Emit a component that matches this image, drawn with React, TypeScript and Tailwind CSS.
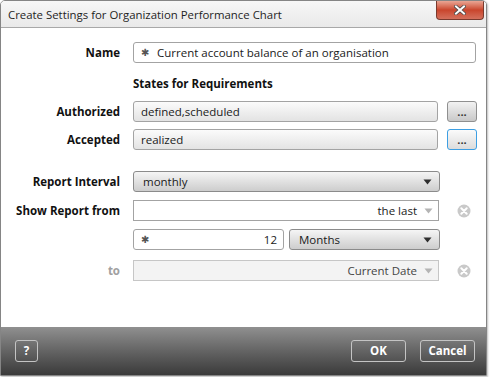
import React from "react";

const font = { fontFamily: '"Open Sans", "Noto Sans", Arial, sans-serif' };

const Caret = ({ light = false }: { light?: boolean }) => (
    <svg width="9" height="6" viewBox="0 0 9 6" className="shrink-0">
        <path d="M0.5 0.5 L8.5 0.5 L4.5 5.5 Z" fill={light ? "#b4b4b4" : "#2e2e2e"} />
    </svg>
);

const ClearIcon = () => (
    <svg width="14" height="14" viewBox="0 0 14 14">
        <circle cx="7" cy="7" r="6.5" fill="#c9c9c9" />
        <path d="M4.3 4.3 L9.7 9.7 M9.7 4.3 L4.3 9.7" stroke="#ffffff" strokeWidth="2" strokeLinecap="round" />
    </svg>
);

const Label = ({ children, muted = false }: { children: React.ReactNode; muted?: boolean }) => (
    <div className={`w-[120px] shrink-0 pr-[1px] text-right text-[11.5px] font-bold ${muted ? "text-[#a0a0a0]" : "text-[#111]"}`}>
        {children}
    </div>
);

const DotsButton = ({ focused = false }: { focused?: boolean }) => (
    <button
        className={`ml-[9px] flex h-[21px] w-[30px] items-end justify-center rounded-[3px] border pb-[4px] text-[11px] font-bold leading-none ${
            focused
                ? "border-[#3d9fe3] bg-gradient-to-b from-[#fbfbfb] to-[#dcdcdc]"
                : "border-[#8f8f8f] bg-gradient-to-b from-[#f2f2f2] to-[#c9c9c9]"
        } text-[#333]`}
    >
        ...
    </button>
);

export default function App() {
    return (
        <div className="h-[377px] w-[490px] bg-white" style={font}>
            <div className="flex h-[376px] w-[487px] flex-col overflow-hidden rounded-t-[5px] border border-[#858585] shadow-[1px_1px_2px_rgba(0,0,0,0.25)]">
                {/* Title bar */}
                <div className="flex h-[26px] shrink-0 items-start justify-between bg-gradient-to-b from-[#f7f7f7] to-[#e9e9e9] pl-[7px]">
                    <div className="pt-[6px] text-[11.4px] leading-[16px] text-[#1e1e1e]">
                        Create Settings for Organization Performance Chart
                    </div>
                    <div className="mr-[2px] flex h-[19px] w-[48px] items-center justify-center rounded-b-[4px] border border-t-0 border-[#7a3a2e] bg-gradient-to-b from-[#e9a594] via-[#c9452c] to-[#d4705c]">
                        <svg width="12" height="10" viewBox="0 0 12 10">
                            <path d="M2 1.5 L10 8.5 M10 1.5 L2 8.5" stroke="#4a4a4a" strokeWidth="3.6" strokeLinecap="square" />
                            <path d="M2 1.5 L10 8.5 M10 1.5 L2 8.5" stroke="#ffffff" strokeWidth="2" strokeLinecap="square" />
                        </svg>
                    </div>
                </div>

                {/* Content */}
                <div className="flex flex-1 flex-col border-t border-[#a8a8a8] bg-white pt-[14px] text-[11.5px]">
                    <div className="flex items-center">
                        <Label>Name</Label>
                        <div className="ml-[12px] flex h-[21px] w-[343px] items-center rounded-[3px] border border-[#a3a3a3] bg-white pl-[7px] text-[#1a1a1a]">
                            <span className="mr-[8px] text-[10px] text-[#555]">✱</span>
                            Current account balance of an organisation
                        </div>
                    </div>

                    <div className="ml-[132px] mt-[12px] font-bold leading-[17px] text-[#111]">
                        States for Requirements
                    </div>

                    <div className="mt-[9px] flex items-center">
                        <Label>Authorized</Label>
                        <div className="ml-[12px] flex h-[21px] w-[305px] items-center rounded-[3px] border border-[#a3a3a3] bg-gradient-to-b from-[#fbfbfb] to-[#e3e3e3] pl-[7px] text-[#1a1a1a]">
                            defined,scheduled
                        </div>
                        <DotsButton />
                    </div>

                    <div className="mt-[7px] flex items-center">
                        <Label>Accepted</Label>
                        <div className="ml-[12px] flex h-[21px] w-[305px] items-center rounded-[3px] border border-[#a3a3a3] bg-gradient-to-b from-[#fbfbfb] to-[#e3e3e3] pl-[7px] text-[#1a1a1a]">
                            realized
                        </div>
                        <DotsButton focused />
                    </div>

                    <div className="mt-[21px] flex items-center">
                        <Label>Report Interval</Label>
                        <div className="ml-[12px] flex h-[21px] w-[307px] items-center justify-between rounded-[3px] border border-[#8b8b8b] bg-gradient-to-b from-[#f5f5f5] to-[#cdcdcd] pl-[9px] pr-[7px] text-[#1a1a1a]">
                            monthly
                            <Caret />
                        </div>
                    </div>

                    <div className="mt-[8px] flex items-center">
                        <Label>Show Report from</Label>
                        <div className="ml-[12px] flex h-[21px] w-[306px] items-center justify-end gap-[7px] border border-[#a3a3a3] bg-white pr-[5px] text-[#1a1a1a]">
                            the last
                            <Caret light />
                        </div>
                        <div className="ml-[18px] flex items-center">
                            <ClearIcon />
                        </div>
                    </div>

                    <div className="mt-[8px] flex items-center">
                        <div className="ml-[132px] flex h-[21px] w-[151px] items-center justify-between rounded-[3px] border border-[#a3a3a3] bg-white pl-[7px] pr-[6px] text-[#1a1a1a]">
                            <span className="text-[10px] text-[#555]">✱</span>
                            12
                        </div>
                        <div className="ml-[5px] flex h-[21px] w-[151px] items-center justify-between rounded-[3px] border border-[#8b8b8b] bg-gradient-to-b from-[#f5f5f5] to-[#cdcdcd] pl-[9px] pr-[7px] text-[#1a1a1a]">
                            Months
                            <Caret />
                        </div>
                    </div>

                    <div className="mt-[10px] flex items-center">
                        <Label muted>to</Label>
                        <div className="ml-[12px] flex h-[21px] w-[306px] items-center justify-end gap-[7px] border border-[#c6c6c6] bg-[#f3f3f3] pr-[5px] text-[#444]">
                            Current Date
                            <Caret light />
                        </div>
                        <div className="ml-[18px] flex items-center">
                            <ClearIcon />
                        </div>
                    </div>
                </div>

                {/* Footer */}
                <div className="flex h-[48px] shrink-0 items-center justify-between bg-gradient-to-b from-[#909090] to-[#3b3b3b] pl-[14px] pr-[11px]">
                    <button className="flex h-[22px] w-[23px] items-center justify-center rounded-[3px] border border-[#c4c4c4] text-[11.5px] font-bold text-white">
                        ?
                    </button>
                    <div className="flex items-center gap-[14px]">
                        <button className="flex h-[22px] w-[55px] items-center justify-center rounded-[3px] border border-[#c4c4c4] text-[11.5px] font-bold text-white">
                            OK
                        </button>
                        <button className="flex h-[22px] w-[55px] items-center justify-center rounded-[3px] border border-[#c4c4c4] text-[11.5px] font-bold text-white">
                            Cancel
                        </button>
                    </div>
                </div>
            </div>
        </div>
    );
}
